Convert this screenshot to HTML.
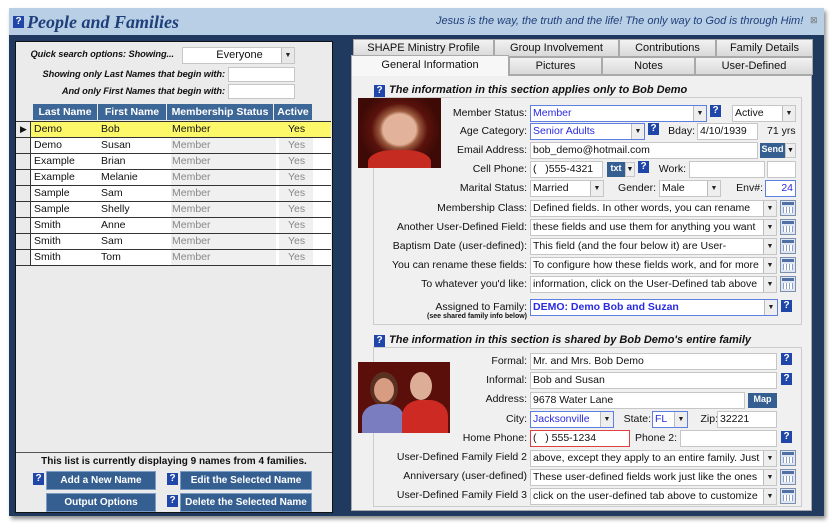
<!DOCTYPE html>
<html><head><meta charset="utf-8"><style>
*{box-sizing:border-box;margin:0;padding:0}
body{width:832px;height:531px;background:#fff;position:relative;overflow:hidden;font-family:"Liberation Sans",sans-serif;font-size:10.5px;color:#111}
div,span{position:absolute}
.win{left:9px;top:8px;width:815px;height:508px;background:#1f3a5e;box-shadow:2px 3px 4px rgba(0,0,0,.45)}
.title{left:9px;top:8px;width:815px;height:27px;background:#b9cfe6}
.q{width:11px;height:12px;background:#1f46a8;color:#fff;font-weight:bold;font-size:10px;line-height:12px;text-align:center}
.f{height:17px;background:#fff;border:1px solid #c6c6c6;padding-left:2px;line-height:15px;white-space:nowrap;overflow:hidden}
.dd{width:13px;height:15px;background:#eee;border-left:1px solid #bbb;top:0;right:0;font-size:7px;text-align:center;line-height:15px;color:#222}
.l{right:305px;text-align:right;white-space:nowrap;line-height:17px}
.cal{width:16px;height:16px;background:#dfe6f0;border:1px solid #7b8fae}
.cal:before{content:"";position:absolute;left:1px;top:1px;width:12px;height:3px;background:#4f6fa5}
.cal:after{content:"";position:absolute;left:2px;top:6px;width:10px;height:6px;background:repeating-linear-gradient(90deg,#8aa0c8 0 1px,#fff 1px 3px)}
.btn{background:#355f91;color:#fff;font-weight:bold;text-align:center;border:1px solid #7d9cc4}
.hd{background:#3d6797;color:#fff;font-weight:bold;text-align:center;height:16px;line-height:16px;top:104px}
.row{left:16px;width:315px;height:16px;border-bottom:1px solid #333;background:#fff;line-height:15px}
.row span{top:0}
.g{color:#888;background:#f0f0f0}
.tab{height:18px;background:linear-gradient(#f2f2f2,#d9d9d9);border:1px solid #a9a9a9;text-align:center;line-height:16px;font-size:11px}
.sec{font-weight:bold;font-style:italic;font-size:11px}
.ql{font-weight:bold;font-style:italic;font-size:9.3px;white-space:nowrap;letter-spacing:-0.1px}
</style></head><body>
<div class="win"></div>
<div class="title"></div>
<div class="q" style="left:13px;top:16px;height:12px">?</div>
<div style="left:27px;top:12px;font-family:'Liberation Serif',serif;font-weight:bold;font-style:italic;font-size:18px;color:#1f3f7a">People and Families</div>
<div style="left:436px;top:15px;font-style:italic;font-size:11px;color:#1f3f7a;white-space:nowrap">Jesus is the way, the truth and the life! The only way to God is through Him!</div>
<div style="left:810px;top:15px;font-size:9px;color:#777">⊠</div>

<!-- left panel -->
<div style="left:15px;top:41px;width:318px;height:472px;background:#ebebeb;border:1px solid #111"></div>
<div class="ql" style="right:658px;top:49px">Quick search options: Showing...</div>
<div class="f" style="left:182px;top:47px;width:113px;text-align:center;font-size:11px">Everyone<div class="dd" style="background:#e8e8e8">▼</div></div>
<div class="ql" style="right:607px;top:69px">Showing only Last Names that begin with:</div>
<div class="f" style="left:228px;top:67px;width:67px;height:15px"></div>
<div class="ql" style="right:607px;top:86px">And only First Names that begin with:</div>
<div class="f" style="left:228px;top:84px;width:67px;height:15px"></div>
<div class="hd" style="left:33px;width:64px">Last Name</div>
<div class="hd" style="left:98px;width:68px">First Name</div>
<div class="hd" style="left:167px;width:106px">Membership Status</div>
<div class="hd" style="left:274px;width:38px">Active</div>
<div style="left:16px;top:121px;width:315px;height:1px;background:#333"></div>

<div class="row" style="top:122px;background:#fff;"><span style="left:0;width:15px;height:15px;background:#ebebeb;font-size:9px;text-align:center">▶</span><span style="left:15px;width:300px;height:15px;background:#fdf86a"></span><span style="left:18px">Demo</span><span style="left:85px">Bob</span><span style="left:156px">Member</span><span style="left:272px">Yes</span></div>
<div class="row" style="top:138px"><span style="left:0;width:15px;height:15px;background:#ebebeb"></span><span style="left:18px">Demo</span><span style="left:85px">Susan</span><span class="g" style="left:155px;width:105px;padding-left:1px">Member</span><span class="g" style="left:263px;width:34px;padding-left:9px">Yes</span></div>
<div class="row" style="top:154px"><span style="left:0;width:15px;height:15px;background:#ebebeb"></span><span style="left:18px">Example</span><span style="left:85px">Brian</span><span class="g" style="left:155px;width:105px;padding-left:1px">Member</span><span class="g" style="left:263px;width:34px;padding-left:9px">Yes</span></div>
<div class="row" style="top:170px"><span style="left:0;width:15px;height:15px;background:#ebebeb"></span><span style="left:18px">Example</span><span style="left:85px">Melanie</span><span class="g" style="left:155px;width:105px;padding-left:1px">Member</span><span class="g" style="left:263px;width:34px;padding-left:9px">Yes</span></div>
<div class="row" style="top:186px"><span style="left:0;width:15px;height:15px;background:#ebebeb"></span><span style="left:18px">Sample</span><span style="left:85px">Sam</span><span class="g" style="left:155px;width:105px;padding-left:1px">Member</span><span class="g" style="left:263px;width:34px;padding-left:9px">Yes</span></div>
<div class="row" style="top:202px"><span style="left:0;width:15px;height:15px;background:#ebebeb"></span><span style="left:18px">Sample</span><span style="left:85px">Shelly</span><span class="g" style="left:155px;width:105px;padding-left:1px">Member</span><span class="g" style="left:263px;width:34px;padding-left:9px">Yes</span></div>
<div class="row" style="top:218px"><span style="left:0;width:15px;height:15px;background:#ebebeb"></span><span style="left:18px">Smith</span><span style="left:85px">Anne</span><span class="g" style="left:155px;width:105px;padding-left:1px">Member</span><span class="g" style="left:263px;width:34px;padding-left:9px">Yes</span></div>
<div class="row" style="top:234px"><span style="left:0;width:15px;height:15px;background:#ebebeb"></span><span style="left:18px">Smith</span><span style="left:85px">Sam</span><span class="g" style="left:155px;width:105px;padding-left:1px">Member</span><span class="g" style="left:263px;width:34px;padding-left:9px">Yes</span></div>
<div class="row" style="top:250px"><span style="left:0;width:15px;height:15px;background:#ebebeb"></span><span style="left:18px">Smith</span><span style="left:85px">Tom</span><span class="g" style="left:155px;width:105px;padding-left:1px">Member</span><span class="g" style="left:263px;width:34px;padding-left:9px">Yes</span></div>
<div style="left:30px;top:122px;width:1px;height:144px;background:#333"></div>

<div style="left:16px;top:452px;width:316px;height:1px;background:#555"></div>
<div style="left:16px;top:456px;width:316px;text-align:center;font-weight:bold;font-size:10px">This list is currently displaying 9 names from 4 families.</div>
<div class="q" style="left:33px;top:473px">?</div>
<div class="btn" style="left:46px;top:471px;width:110px;height:19px;line-height:17px;font-size:10px">Add a New Name</div>
<div class="q" style="left:167px;top:473px">?</div>
<div class="btn" style="left:180px;top:471px;width:132px;height:19px;line-height:17px;font-size:10px">Edit the Selected Name</div>
<div class="btn" style="left:46px;top:493px;width:110px;height:19px;line-height:17px;font-size:10px">Output Options</div>
<div class="q" style="left:167px;top:495px">?</div>
<div class="btn" style="left:180px;top:493px;width:132px;height:19px;line-height:17px;font-size:10px">Delete the Selected Name</div>

<!-- right panel -->
<div style="left:351px;top:75px;width:461px;height:436px;background:#f0f0f0;border:1px solid #aaa"></div>
<div class="tab" style="left:353px;top:39px;width:141px">SHAPE Ministry Profile</div>
<div class="tab" style="left:494px;top:39px;width:125px">Group Involvement</div>
<div class="tab" style="left:619px;top:39px;width:97px">Contributions</div>
<div class="tab" style="left:716px;top:39px;width:97px">Family Details</div>
<div class="tab" style="left:509px;top:57px;width:93px">Pictures</div>
<div class="tab" style="left:602px;top:57px;width:93px">Notes</div>
<div class="tab" style="left:695px;top:57px;width:118px">User-Defined</div>
<div style="left:351px;top:55px;width:158px;height:21px;background:#f7f7f7;border:1px solid #aaa;border-bottom:none;text-align:center;line-height:19px;font-size:11px">General Information</div>

<div class="q" style="left:374px;top:85px">?</div>
<div class="sec" style="left:389px;top:84px">The information in this section applies only to Bob Demo</div>
<div style="left:373px;top:97px;width:429px;height:228px;border:1px solid #ccc"></div>
<div style="left:358px;top:98px;width:83px;height:70px;background:radial-gradient(ellipse at 50% 45%,#e2b39a 0 28%,#9a5a3e 34%,#5a120c 48%,#3d0a06 70%);overflow:hidden"><span style="left:10px;top:52px;width:63px;height:30px;border-radius:40% 40% 0 0;background:#c62b22"></span></div>

<div class="l" style="top:105px">Member Status:</div>
<div class="f" style="left:530px;top:105px;width:177px;color:#2a2ae0;border-color:#5d7fe0">Member<div class="dd">▼</div></div>
<div class="q" style="left:710px;top:105px">?</div>
<div class="f" style="left:732px;top:105px;width:64px">Active<div class="dd">▼</div></div>

<div class="l" style="top:123px">Age Category:</div>
<div class="f" style="left:530px;top:123px;width:115px;color:#2a2ae0;border-color:#5d7fe0">Senior Adults<div class="dd">▼</div></div>
<div class="q" style="left:648px;top:123px">?</div>
<div style="right:137px;top:123px;line-height:17px">Bday:</div>
<div class="f" style="left:697px;top:123px;width:61px">4/10/1939</div>
<div style="left:767px;top:123px;line-height:17px">71 yrs</div>

<div class="l" style="top:142px">Email Address:</div>
<div class="f" style="left:530px;top:142px;width:228px">bob_demo@hotmail.com</div>
<div class="btn" style="left:760px;top:143px;width:25px;height:15px;line-height:13px;font-size:9px;border:none">Send</div>
<div class="f" style="left:785px;top:143px;width:11px;height:15px;padding:0;text-align:center;font-size:7px;line-height:13px;background:#eee">▼</div>

<div class="l" style="top:161px">Cell Phone:</div>
<div class="f" style="left:530px;top:161px;width:73px">(&nbsp;&nbsp;&nbsp;)555-4321</div>
<div class="btn" style="left:607px;top:162px;width:18px;height:15px;line-height:13px;font-size:9px;border:none">txt</div>
<div class="f" style="left:625px;top:162px;width:10px;height:15px;padding:0;text-align:center;font-size:7px;line-height:13px;background:#eee">▼</div>
<div class="q" style="left:638px;top:161px">?</div>
<div style="right:146px;top:161px;line-height:17px">Work:</div>
<div class="f" style="left:689px;top:161px;width:76px"></div>
<div class="f" style="left:767px;top:161px;width:29px"></div>

<div class="l" style="top:180px">Marital Status:</div>
<div class="f" style="left:530px;top:180px;width:74px">Married<div class="dd">▼</div></div>
<div style="right:176px;top:180px;line-height:17px">Gender:</div>
<div class="f" style="left:659px;top:180px;width:62px">Male<div class="dd">▼</div></div>
<div style="right:69px;top:180px;line-height:17px">Env#:</div>
<div class="f" style="left:765px;top:180px;width:31px;text-align:right;padding-right:2px;color:#2a2ae0;border-color:#5d7fe0">24</div>

<div class="l" style="top:200px">Membership Class:</div>
<div class="f" style="left:530px;top:200px;width:247px">Defined fields. In other words, you can rename<div class="dd">▼</div></div>
<div class="cal" style="left:780px;top:200px"></div>
<div class="l" style="top:219px">Another User-Defined Field:</div>
<div class="f" style="left:530px;top:219px;width:247px">these fields and use them for anything you want<div class="dd">▼</div></div>
<div class="cal" style="left:780px;top:219px"></div>
<div class="l" style="top:238px">Baptism Date (user-defined):</div>
<div class="f" style="left:530px;top:238px;width:247px">This field (and the four below it) are User-<div class="dd">▼</div></div>
<div class="cal" style="left:780px;top:238px"></div>
<div class="l" style="top:257px">You can rename these fields:</div>
<div class="f" style="left:530px;top:257px;width:247px">To configure how these fields work, and for more<div class="dd">▼</div></div>
<div class="cal" style="left:780px;top:257px"></div>
<div class="l" style="top:276px">To whatever you'd like:</div>
<div class="f" style="left:530px;top:276px;width:247px">information, click on the User-Defined tab above<div class="dd">▼</div></div>
<div class="cal" style="left:780px;top:276px"></div>

<div class="l" style="top:299px">Assigned to Family:</div>
<div class="l" style="top:312px;font-size:7px;font-weight:bold;line-height:9px">(see shared family info below)</div>
<div class="f" style="left:530px;top:299px;width:248px;color:#2a2ae0;font-weight:bold;border-color:#5d7fe0">DEMO: Demo Bob and Suzan<div class="dd">▼</div></div>
<div class="q" style="left:781px;top:300px">?</div>

<div class="q" style="left:374px;top:335px">?</div>
<div class="sec" style="left:389px;top:334px">The information in this section is shared by Bob Demo's entire family</div>
<div style="left:373px;top:347px;width:429px;height:160px;border:1px solid #ccc"></div>
<div style="left:358px;top:362px;width:92px;height:71px;background:#5a0f0b;overflow:hidden">
<span style="left:12px;top:10px;width:28px;height:34px;border-radius:50%;background:#5a3020"></span>
<span style="left:16px;top:16px;width:20px;height:24px;border-radius:50%;background:#d79c82"></span>
<span style="left:4px;top:42px;width:42px;height:35px;border-radius:40% 40% 0 0;background:#7a7ec0"></span>
<span style="left:52px;top:10px;width:22px;height:28px;border-radius:50%;background:#dcae98"></span>
<span style="left:44px;top:38px;width:46px;height:40px;border-radius:40% 40% 0 0;background:#cc2a22"></span>
</div>

<div class="l" style="top:353px">Formal:</div>
<div class="f" style="left:530px;top:353px;width:247px">Mr. and Mrs. Bob Demo</div>
<div class="q" style="left:781px;top:353px">?</div>
<div class="l" style="top:372px">Informal:</div>
<div class="f" style="left:530px;top:372px;width:247px">Bob and Susan</div>
<div class="q" style="left:781px;top:373px">?</div>
<div class="l" style="top:391px">Address:</div>
<div class="f" style="left:530px;top:392px;width:215px">9678 Water Lane</div>
<div class="btn" style="left:748px;top:393px;width:29px;height:15px;line-height:13px;font-size:9px;border:none">Map</div>
<div class="l" style="top:411px">City:</div>
<div class="f" style="left:530px;top:411px;width:84px;color:#2a2ae0;border-color:#5d7fe0">Jacksonville<div class="dd">▼</div></div>
<div style="right:181px;top:411px;line-height:17px">State:</div>
<div class="f" style="left:652px;top:411px;width:36px;color:#2a2ae0;border-color:#5d7fe0">FL<div class="dd">▼</div></div>
<div style="right:114px;top:411px;line-height:17px">Zip:</div>
<div class="f" style="left:717px;top:411px;width:60px">32221</div>
<div class="l" style="top:430px">Home Phone:</div>
<div class="f" style="left:530px;top:430px;width:100px;border-color:#e04040">(&nbsp;&nbsp;&nbsp;) 555-1234</div>
<div style="right:155px;top:430px;line-height:17px">Phone 2:</div>
<div class="f" style="left:680px;top:430px;width:97px"></div>
<div class="q" style="left:781px;top:431px">?</div>

<div class="l" style="top:449px">User-Defined Family Field 2</div>
<div class="f" style="left:530px;top:450px;width:247px">above, except they apply to an entire family. Just<div class="dd">▼</div></div>
<div class="cal" style="left:780px;top:450px"></div>
<div class="l" style="top:468px">Anniversary (user-defined)</div>
<div class="f" style="left:530px;top:469px;width:247px">These user-defined fields work just like the ones<div class="dd">▼</div></div>
<div class="cal" style="left:780px;top:469px"></div>
<div class="l" style="top:487px">User-Defined Family Field 3</div>
<div class="f" style="left:530px;top:488px;width:247px">click on the user-defined tab above to customize<div class="dd">▼</div></div>
<div class="cal" style="left:780px;top:488px"></div>
</body></html>
